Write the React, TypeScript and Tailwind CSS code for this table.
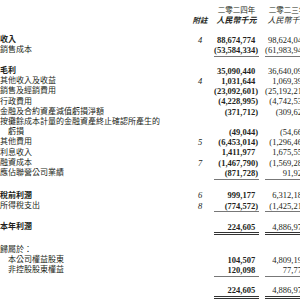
import React from 'react'

type Row = {
    label?: string
    bold?: boolean
    indent?: boolean
    note?: string
    cur?: string
    prev?: string
}

const cjk = { fontFamily: '"Liberation Serif", "Noto Sans CJK TC", serif' }

// closing parenthesis hangs out to the right, so plain figures get an invisible one
const Num = ({ v, bold }: { v?: string; bold?: boolean }) => {
    if (!v) return <span />
    const neg = v.startsWith('(')
    return (
        <span className={bold ? 'font-bold' : 'font-normal'}>
            {v}
            {!neg && <span className="invisible">)</span>}
        </span>
    )
}

const Line = ({ row }: { row: Row }) => (
    <div className="flex h-[10.2px] items-center leading-none">
        <div className={`w-[186px] shrink-0 text-[8px] whitespace-nowrap ${row.bold ? 'font-bold' : ''} ${row.indent ? 'pl-[8px]' : ''}`}>
            {row.label}
        </div>
        <div className="w-[28px] shrink-0 text-center text-[8.5px] italic">{row.note}</div>
        <div className="w-[45px] shrink-0 text-right text-[8.5px] pr-[1px]">
            <Num v={row.cur} bold />
        </div>
        <div className="w-[45px] shrink-0 ml-[6px] text-right text-[8.5px] pr-[1px]">
            <Num v={row.prev} />
        </div>
    </div>
)

const Rule = ({ double, className }: { double?: boolean; className?: string }) => (
    <div className={`flex ${className ?? ''}`}>
        <div className="w-[214px] shrink-0" />
        <div className={`w-[45px] shrink-0 ${double ? 'border-t-[3px] border-double border-[#333]' : 'border-t border-[#777]'}`} />
        <div className={`w-[45px] shrink-0 ml-[6px] ${double ? 'border-t-[3px] border-double border-[#333]' : 'border-t border-[#777]'}`} />
    </div>
)

const App = () => {
    return (
        <div className="w-[300px] h-[300px] overflow-hidden bg-white text-[#231f20]" style={cjk}>
            <div className="w-[312px] pt-[6px] flex flex-col">
                <div className="flex h-[10px] items-center leading-none">
                    <div className="w-[214px] shrink-0" />
                    <div className="w-[45px] shrink-0 text-center text-[7.5px]">二零二四年</div>
                    <div className="w-[45px] shrink-0 ml-[6px] text-center text-[7.5px]">二零二三年</div>
                </div>
                <div className="flex h-[10px] items-center leading-none">
                    <div className="w-[186px] shrink-0" />
                    <div className="w-[28px] shrink-0 text-center text-[7.5px] italic font-bold">附註</div>
                    <div className="w-[45px] shrink-0 text-center text-[8px] italic font-bold">人民幣千元</div>
                    <div className="w-[45px] shrink-0 ml-[6px] text-center text-[8px] italic">人民幣千元</div>
                </div>

                <div className="h-[9px]" />
                <Line row={{ label: '收入', bold: true, note: '4', cur: '88,674,774', prev: '98,624,049' }} />
                <Line row={{ label: '銷售成本', cur: '(53,584,334)', prev: '(61,983,947)' }} />
                <Rule className="mt-[1px]" />

                <div className="h-[8.6px]" />
                <Line row={{ label: '毛利', bold: true, cur: '35,090,440', prev: '36,640,095' }} />
                <Line row={{ label: '其他收入及收益', note: '4', cur: '1,031,644', prev: '1,069,392' }} />
                <Line row={{ label: '銷售及經銷費用', cur: '(23,092,601)', prev: '(25,192,214)' }} />
                <Line row={{ label: '行政費用', cur: '(4,228,995)', prev: '(4,742,531)' }} />
                <Line row={{ label: '金融及合約資產減值虧損淨額', cur: '(371,712)', prev: '(309,624)' }} />
                <Line row={{ label: '按攤餘成本計量的金融資產終止確認所產生的' }} />
                <Line row={{ label: '虧損', indent: true, cur: '(49,044)', prev: '(54,669)' }} />
                <Line row={{ label: '其他費用', note: '5', cur: '(6,453,014)', prev: '(1,296,468)' }} />
                <Line row={{ label: '利息收入', cur: '1,411,977', prev: '1,675,553' }} />
                <Line row={{ label: '融資成本', note: '7', cur: '(1,467,790)', prev: '(1,569,287)' }} />
                <Line row={{ label: '應佔聯營公司業績', cur: '(871,728)', prev: '91,921' }} />
                <Rule className="mt-[0.5px]" />

                <div className="h-[11px]" />
                <Line row={{ label: '稅前利潤', bold: true, note: '6', cur: '999,177', prev: '6,312,187' }} />
                <Line row={{ label: '所得稅支出', note: '8', cur: '(774,572)', prev: '(1,425,213)' }} />
                <Rule className="mt-[0.5px]" />

                <div className="h-[9.6px]" />
                <Line row={{ label: '本年利潤', bold: true, cur: '224,605', prev: '4,886,974' }} />
                <Rule double />

                <div className="h-[9.8px]" />
                <Line row={{ label: '歸屬於：' }} />
                <Line row={{ label: '本公司權益股東', indent: true, cur: '104,507', prev: '4,809,197' }} />
                <Line row={{ label: '非控股股東權益', indent: true, cur: '120,098', prev: '77,777' }} />
                <Rule className="mt-[0.5px]" />

                <div className="h-[8.6px]" />
                <Line row={{ cur: '224,605', prev: '4,886,974' }} />
                <Rule double />
            </div>
        </div>
    )
}

export default App
